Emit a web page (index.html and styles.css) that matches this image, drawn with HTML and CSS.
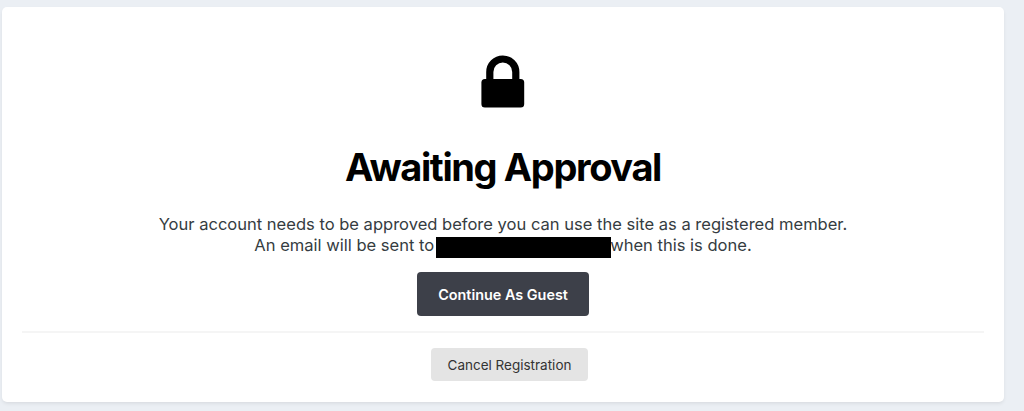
FILE: index.html
```html
<!DOCTYPE html>
<html lang="en">
<head>
    <meta charset="UTF-8">
    <meta name="viewport" content="width=device-width, initial-scale=1.0">
    <title>Awaiting Approval</title>
    <link rel="stylesheet" href="styles.css">
</head>
<body>
    <div class="card">
        <svg class="lock-icon" viewBox="0 0 44 53" width="44" height="53">
            <path d="M8.8 27V17a13 13 0 0 1 26 0V27" fill="none" stroke="#000" stroke-width="7.2"/>
            <rect x="0.4" y="24" width="42.8" height="28.4" rx="3.5"/>
        </svg>
        <h1>Awaiting Approval</h1>
        <p class="message">
            Your account needs to be approved before you can use the site as a registered member.<br>
            An email will be sent to<span class="redacted"></span>when this is done.
        </p>
        <button type="button" class="btn btn-primary">Continue As Guest</button>
        <div class="card-footer">
            <button type="button" class="btn btn-cancel">Cancel Registration</button>
        </div>
    </div>
</body>
</html>
```

FILE: styles.css
```css
body {
    margin: 0;
    padding: 7px 20px 9px 2px;
    height: 411px;
    box-sizing: border-box;
    overflow: hidden;
    background-color: #ebeff4;
    font-family: Inter, "Liberation Sans", sans-serif;
}
.card {
    display: flex;
    flex-direction: column;
    align-items: center;
    height: 395px;
    padding: 48px 20px 0;
    box-sizing: border-box;
    background-color: #fff;
    border-radius: 5px;
    box-shadow: 0 2px 4px -1px rgba(0, 0, 0, 0.1);
}
.lock-icon {
    display: block;
    margin-right: 1px;
}
h1 {
    margin: 36px 0 0;
    font-size: 38px;
    line-height: 46px;
    font-weight: 700;
    letter-spacing: -1.38px;
    color: #000;
    white-space: nowrap;
}
.message {
    margin: 24px 0 0;
    font-size: 16.55px;
    line-height: 21px;
    text-align: center;
    color: #353c41;
    white-space: nowrap;
}
.redacted {
    display: inline-block;
    width: 175px;
    height: 21px;
    margin: 0 -1px -21px 2px;
    vertical-align: top;
    position: relative;
    top: 2px;
    background-color: #000;
}
.btn {
    padding: 0;
    border: none;
    border-radius: 4px;
    font-family: inherit;
    cursor: pointer;
}
.btn-primary {
    width: 172px;
    height: 44px;
    margin-top: 16px;
    background-color: #3d4049;
    color: #fff;
    font-size: 14.4px;
    font-weight: 600;
}
.card-footer {
    width: 100%;
    margin-top: 15px;
    padding: 15px 0 0 13px;
    box-sizing: border-box;
    border-top: 2px solid #f5f5f5;
    text-align: center;
}
.btn-cancel {
    width: 157px;
    height: 33px;
    background-color: #e4e4e4;
    color: #333;
    font-size: 13.5px;
}
```
